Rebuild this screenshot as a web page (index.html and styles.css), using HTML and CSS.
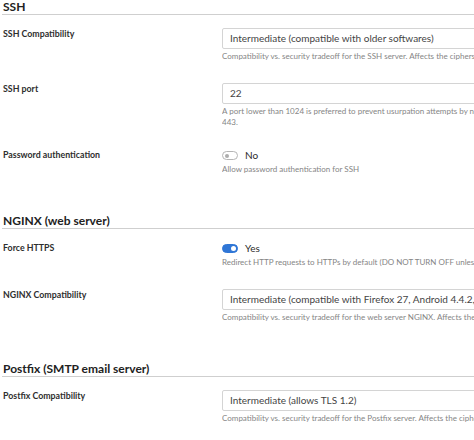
FILE: index.html
```html
<!DOCTYPE html>
<html>
<head>
<meta charset="utf-8">
<link rel="stylesheet" href="styles.css">
</head>
<body>
<div class="page">
  <section class="section">
    <h2 class="section-title">SSH</h2>
    <div class="row">
      <div class="label">SSH Compatibility</div>
      <div class="field">
        <div class="input">Intermediate (compatible with older softwares)</div>
        <div class="help">Compatibility vs. security tradeoff for the SSH server. Affects the ciphers (and other security-related aspects)</div>
      </div>
    </div>
    <div class="row">
      <div class="label">SSH port</div>
      <div class="field">
        <div class="input">22</div>
        <div class="help">A port lower than 1024 is preferred to prevent usurpation attempts by non-administrator services on the remote machine. You should also avoid using a port already in use, such as 80 or<br>443.</div>
      </div>
    </div>
    <div class="row">
      <div class="label">Password authentication</div>
      <div class="field">
        <div class="switch-row"><span class="switch"></span><span class="switch-text">No</span></div>
        <div class="help">Allow password authentication for SSH</div>
      </div>
    </div>
  </section>

  <section class="section">
    <h2 class="section-title">NGINX (web server)</h2>
    <div class="row">
      <div class="label">Force HTTPS</div>
      <div class="field">
        <div class="switch-row"><span class="switch on"></span><span class="switch-text">Yes</span></div>
        <div class="help">Redirect HTTP requests to HTTPs by default (DO NOT TURN OFF unless you really know what you're doing!)</div>
      </div>
    </div>
    <div class="row">
      <div class="label">NGINX Compatibility</div>
      <div class="field">
        <div class="input">Intermediate (compatible with Firefox 27, Android 4.4.2, Chrome 31, Edge, IE 11, Safari 9)</div>
        <div class="help">Compatibility vs. security tradeoff for the web server NGINX. Affects the ciphers (and other security-related aspects)</div>
      </div>
    </div>
  </section>

  <section class="section">
    <h2 class="section-title">Postfix (SMTP email server)</h2>
    <div class="row">
      <div class="label">Postfix Compatibility</div>
      <div class="field">
        <div class="input">Intermediate (allows TLS 1.2)</div>
        <div class="help">Compatibility vs. security tradeoff for the Postfix server. Affects the ciphers (and other security-related aspects)</div>
      </div>
    </div>
  </section>
</div>
</body>
</html>
```

FILE: styles.css
```css
html, body {
  margin: 0;
  padding: 0;
  background: #ffffff;
  overflow: hidden;
}
body {
  font-family: Lato, "Noto Sans", sans-serif;
  color: #2b2b2b;
}
.page {
  width: 640px;
  padding-left: 2px;
}
.section + .section {
  margin-top: 28px;
}
.section-title {
  margin: 0;
  padding-left: 1px;
  font-size: 12px;
  line-height: 14px;
  font-weight: 700;
  color: #222;
  border-bottom: 1px solid #cfcfcf;
}
.row {
  display: grid;
  grid-template-columns: 220px 1fr;
  padding: 10px 0 11px;
}
.section-title + .row {
  padding-top: 13px;
}
.label {
  padding-left: 1px;
  font-size: 8.8px;
  line-height: 12px;
  font-weight: 700;
  color: #2e2e2e;
}
.field {
  min-width: 0;
}
.input {
  height: 21px;
  box-sizing: border-box;
  border: 1px solid #d4d4d4;
  border-radius: 2px;
  padding: 0 7px;
  font-size: 10px;
  line-height: 19px;
  color: #444;
  white-space: nowrap;
  overflow: hidden;
}
.help {
  margin-top: 2px;
  font-size: 8px;
  line-height: 11px;
  color: #858585;
  white-space: nowrap;
  overflow: hidden;
}
.switch-row {
  display: flex;
  align-items: center;
  gap: 7px;
  height: 13px;
}
.switch {
  position: relative;
  width: 16px;
  height: 9px;
  box-sizing: border-box;
  border: 1px solid #b5b5b5;
  border-radius: 5px;
  background: #fff;
}
.switch::after {
  content: "";
  position: absolute;
  top: 1.5px;
  left: 2px;
  width: 4px;
  height: 4px;
  border-radius: 50%;
  background: #adadad;
}
.switch.on {
  background: #2f76d6;
  border-color: #2f76d6;
}
.switch.on::after {
  left: auto;
  right: 1.5px;
  top: 1px;
  width: 5px;
  height: 5px;
  background: #fff;
}
.switch-text {
  font-size: 10px;
  line-height: 13px;
  color: #2b2b2b;
}
```
